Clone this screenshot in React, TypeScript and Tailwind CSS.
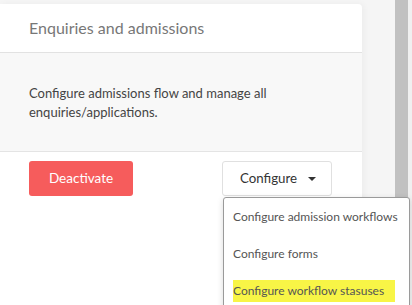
const menuItems = [
  { label: 'Configure admission workflows', highlight: false },
  { label: 'Configure forms', highlight: false },
  { label: 'Configure workflow stasuses', highlight: true },
];

export default function App() {
  return (
    <div
      className="relative flex h-[305px] w-[412px] overflow-hidden bg-[#f5f5f5]"
      style={{ fontFamily: 'Lato, "Open Sans", sans-serif' }}
    >
      {/* card */}
      <div className="mt-[4px] flex w-[362px] flex-col rounded-tr-[4px] bg-white shadow-[2px_0_6px_rgba(0,0,0,0.04)]">
        <div className="flex h-[49px] items-center border-b border-[#e2e2e2] pl-[29px] text-[16px] text-[#777]">
          Enquiries and admissions
        </div>
        <div className="flex h-[99px] items-center border-b border-[#e4e4e4] bg-[#f8f8f8] pl-[29px] pr-[60px] pt-[2px] text-[13px] leading-[19px] text-[#444]">
          Configure admissions flow and manage all enquiries/applications.
        </div>
        <div className="flex items-start justify-between pl-[29px] pr-[30px] pt-[9px]">
          <button className="h-[35px] w-[104px] rounded-[3px] bg-[#f65c5c] text-[13.5px] text-white">
            Deactivate
          </button>
          <button className="flex h-[35px] w-[110px] items-center justify-center gap-[11px] rounded-[3px] border border-[#e0e0e0] bg-white pl-[2px] text-[13.3px] text-[#333]">
            Configure
            <span className="h-0 w-0 border-x-[4px] border-t-[4px] border-x-transparent border-t-[#333]" />
          </button>
        </div>
      </div>

      <div className="flex-1" />
      <div className="w-[13px] bg-[#c1c1c1]" />
      <div className="w-[4px] bg-[#f0f0f0]" />

      {/* dropdown menu */}
      <div className="absolute left-[223px] top-[197px] h-[120px] w-[187px] rounded-[3px] border border-[#9a9a9a] bg-white text-[12px] text-[#555] shadow-[0_2px_6px_rgba(0,0,0,0.15)]">
        {menuItems.map((item) => (
          <div key={item.label} className="flex h-[37px] items-center whitespace-nowrap pl-[9px]">
            <span
              className={
                item.highlight
                  ? 'flex h-[22px] w-[162px] items-center bg-[#f8f546]'
                  : ''
              }
            >
              {item.label}
            </span>
          </div>
        ))}
      </div>
    </div>
  );
}
